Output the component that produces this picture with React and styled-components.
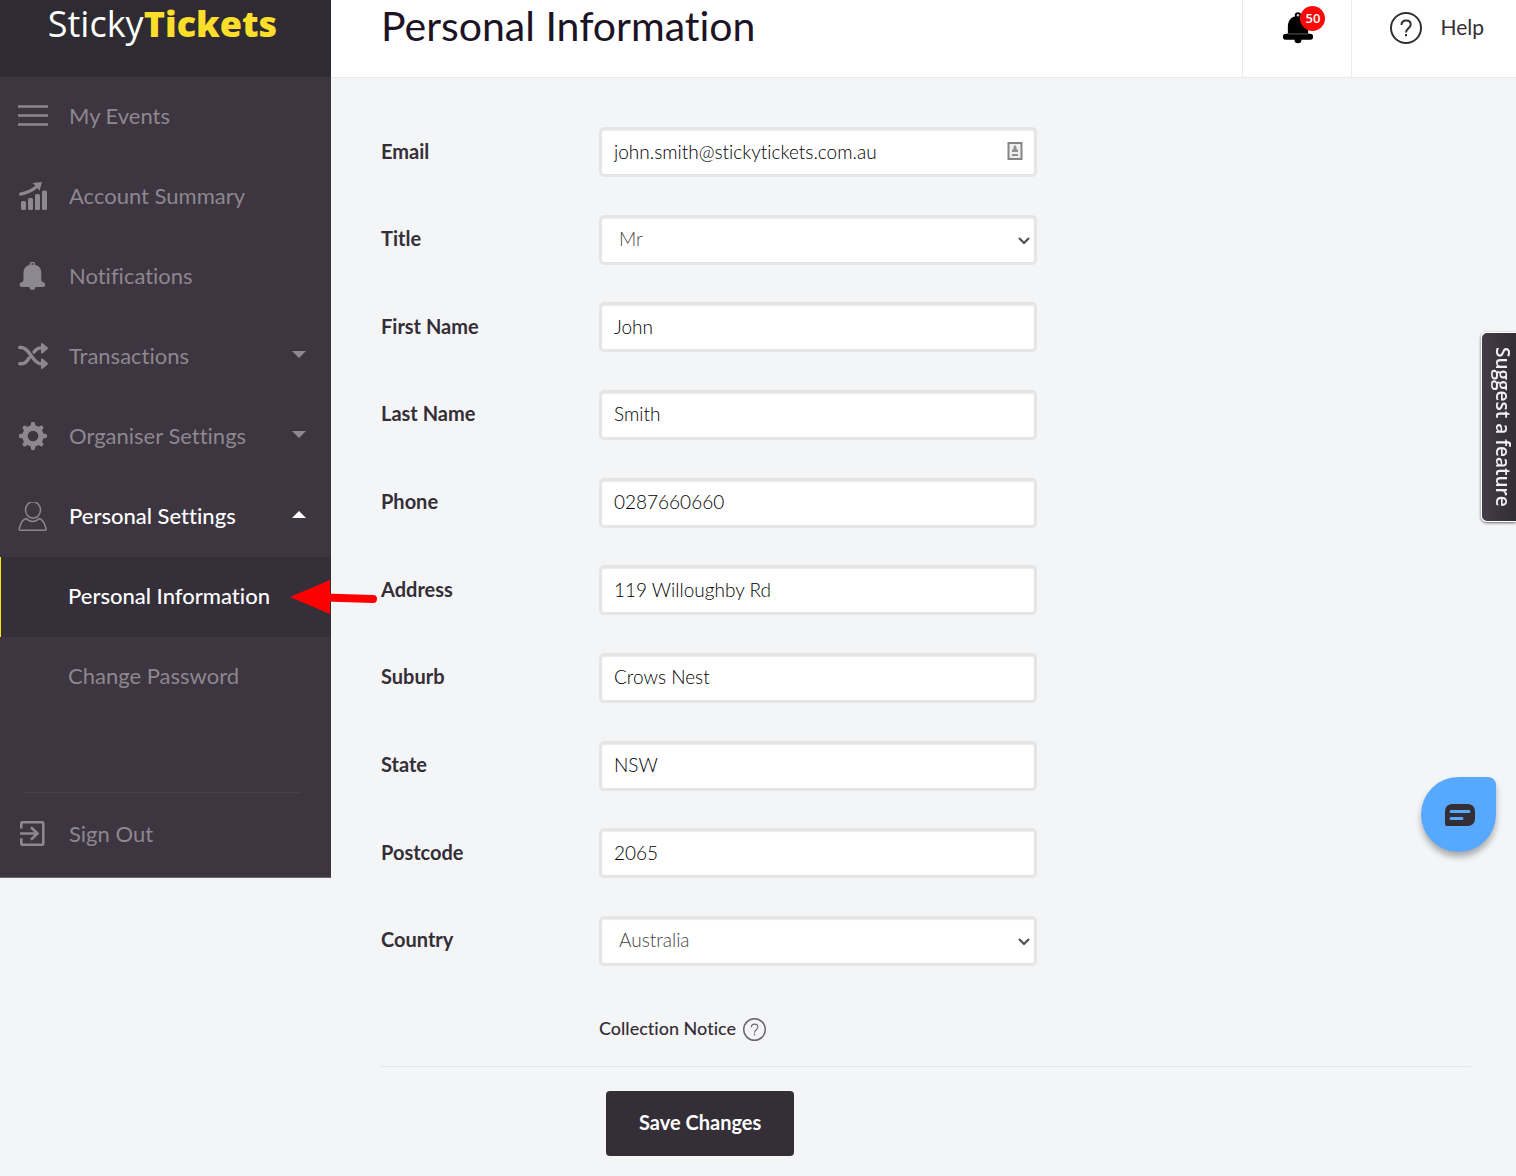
import React from "react";
import styled, { createGlobalStyle } from "styled-components";

const GlobalStyle = createGlobalStyle`
  *, *::before, *::after { box-sizing: border-box; }
  body {
    margin: 0;
    background: #f4f5f7;
    color: #342e37;
    font-family: Lato, "Open Sans", sans-serif;
    font-size: 20px;
    font-variant-ligatures: none;
  }
`;

const Page = styled.div`
  display: flex;
  align-items: flex-start;
`;

const Sidebar = styled.aside`
  flex: 0 0 331px;
  background: #3d3540;
  border-bottom: 1px solid #6b6570;
`;

const Brand = styled.a`
  display: flex;
  justify-content: center;
  height: 77px;
  padding-right: 6px;
  background: #2f2b32;
  color: #fff;
  font-family: "Open Sans", sans-serif;
  font-size: 36px;
  line-height: 48px;
  font-weight: 500;
  text-decoration: none;
`;

const BrandAccent = styled.span`
  color: #fddf2b;
  font-weight: 800;
`;

const NavList = styled.ul`
  margin: 0;
  padding: 0;
  list-style: none;
`;

const NavItem = styled.li`
  position: relative;
`;

const NavLink = styled.a`
  display: flex;
  align-items: center;
  height: 80px;
  padding: 0 24px 0 18px;
  color: ${(p) => (p.$active ? "#fff" : "#8d8790")};
  font-size: 22px;
  font-weight: ${(p) => (p.$active ? 500 : 400)};
  text-decoration: none;
`;

const NavText = styled.span`
  padding-bottom: 3px;
`;

const SubLink = styled(NavLink)`
  padding-left: 67px;
  border-left: 1px solid ${(p) => (p.$active ? "#ffe600" : "transparent")};
  background: ${(p) => (p.$active ? "#352f39" : "transparent")};
`;

const NavIcon = styled.svg`
  width: 30px;
  height: 30px;
  margin-right: 21px;
  color: #8d8790;
`;

const Caret = styled.svg`
  width: 14px;
  height: 7px;
  margin: 0 1px 5px auto;
  color: ${(p) => (p.$active ? "#fff" : "#8d8790")};
`;

const Pointer = styled.svg`
  position: absolute;
  left: 289px;
  top: 22px;
  width: 90px;
  height: 36px;
`;

const SignOut = styled.div`
  margin-top: 75px;

  &::before {
    content: "";
    display: block;
    height: 1px;
    margin: 0 31px 0 24px;
    background: #474047;
  }

  ${NavLink} { height: 84px; }
`;

const Main = styled.main`
  flex: 1;
  min-width: 0;
`;

const TopBar = styled.header`
  display: flex;
  height: 78px;
  padding-left: 50px;
  background: #fff;
  border-bottom: 1px solid #ebebed;
`;

const Title = styled.h1`
  flex: 1;
  margin: 0;
  color: #1c1424;
  font-size: 41px;
  line-height: 52px;
  font-weight: 400;
`;

const AlertButton = styled.button`
  display: flex;
  justify-content: center;
  width: 110px;
  padding: 12px 0 0 2px;
  border: solid #ebebed;
  border-width: 0 1px;
  background: none;
`;

const BellWrap = styled.span`
  position: relative;
  display: block;
  height: 32px;
`;

const Badge = styled.span`
  position: absolute;
  left: 17px;
  top: -6px;
  width: 25px;
  height: 25px;
  border-radius: 50%;
  background: #fb0a0a;
  color: #fff;
  font: 600 13px/24px "Open Sans", sans-serif;
  text-align: center;
`;

const HelpLink = styled.a`
  display: flex;
  align-items: center;
  gap: 18px;
  height: 55px;
  padding: 0 32px 0 38px;
  color: #342e37;
  font-size: 21px;
  text-decoration: none;
`;

const Form = styled.form`
  padding: 49px 45px 20px 50px;
`;

const Fields = styled.div`
  display: flex;
  flex-direction: column;
  justify-content: space-between;
  min-height: 839px;
`;

const Field = styled.div`
  display: flex;
  align-items: center;
`;

const Label = styled.label`
  flex: 0 0 20%;
  padding-bottom: 3px;
  font-size: 20px;
  font-weight: 700;
`;

const Control = styled.div`
  position: relative;
  flex: 0 1 438px;
`;

const TextInput = styled.input`
  display: block;
  width: 100%;
  height: 50px;
  padding: 0 12px 2px;
  border: 3px solid #e5e5e5;
  border-radius: 5px;
  background: #fff;
  box-shadow: inset 0 1px 1px rgba(0, 0, 0, 0.08);
  color: #000;
  font-family: inherit;
  font-size: 19px;
  font-weight: 300;
  font-variant-ligatures: none;
`;

const Select = styled(TextInput)`
  padding: 0 30px 2px 17px;
  color: #444;
  appearance: none;
`;

const Chevron = styled.svg`
  position: absolute;
  right: 7px;
  top: 22px;
  width: 12px;
  height: 8px;
  pointer-events: none;
`;

const ContactIcon = styled.svg`
  position: absolute;
  right: 14px;
  top: 14px;
  width: 16px;
  height: 20px;
`;

const Notice = styled.div`
  display: flex;
  align-items: center;
  gap: 7px;
  margin: 51px 0 24px 20%;
  font-size: 18px;
  font-weight: 500;
`;

const HintButton = styled.button`
  display: flex;
  padding: 0;
  border: 0;
  background: none;
  color: #68646b;
`;

const Divider = styled.hr`
  margin: 0 0 24px;
  border: 0;
  border-top: 1px solid #e5e5e7;
`;

const Actions = styled.div`
  padding-left: 7px;
  margin-left: 20%;
`;

const SaveButton = styled.button`
  height: 65px;
  padding: 0 33px 4px;
  border: 0;
  border-radius: 4px;
  background: #342e37;
  color: #fff;
  font-family: inherit;
  font-size: 20px;
  font-weight: 700;
`;

const SuggestTab = styled.button`
  position: fixed;
  right: 0;
  top: 332px;
  width: 35px;
  height: 190px;
  padding: 0 0 0 8px;
  border: 1px solid #fff;
  border-right: 0;
  border-radius: 6px 0 0 6px;
  background: linear-gradient(90deg, #443d48, #322c35);
  box-shadow: 0 1px 3px rgba(0, 0, 0, 0.6);
  color: #f1f0f2;
  font: 600 19px/24px "Open Sans", sans-serif;
  writing-mode: vertical-rl;
  text-align: center;
`;

const ChatButton = styled.button`
  position: fixed;
  right: 20px;
  top: 777px;
  display: flex;
  align-items: center;
  justify-content: center;
  width: 75px;
  height: 75px;
  padding: 0 0 0 2px;
  border: 0;
  border-radius: 50% 8px 50% 50%;
  background: #57a8ff;
  box-shadow: 0 5px 6px rgba(0, 0, 0, 0.3);
`;

const ICONS = {
  menu: (
    <path stroke="currentColor" strokeWidth="2.500" d="M0 4.500h30M0 13.500h30M0 22.500h30" />
  ),
  chart: (
    <g fill="currentColor">
      <rect x="3" y="19" width="5" height="9" rx="1.500" />
      <rect x="10" y="16" width="5" height="12" rx="1.500" />
      <rect x="17" y="12" width="5" height="16" rx="1.500" />
      <rect x="24" y="8.500" width="5" height="19.500" rx="1.500" />
      <path d="M2 10.500C9 9 13.500 6.800 17.500 3.500L14.500 1 24 0 21.500 9l-2-3C15 9.800 9.500 12.500 2.500 13.800a1.700 1.700 0 0 1-.5-3.300z" />
    </g>
  ),
  bell: (
    <>
      <path
        fill="currentColor"
        d="M5.500 11.500C5.500 6.300 8 3.600 11.800 2.800V2.200a2.600 2.600 0 0 1 5.200 0v.6c3.800.8 6.300 3.500 6.300 8.700v6.500c0 1.200 1 1.900 2.600 2.400 2.200 1 1.400 4.500-.6 4.500h-8a2.900 2.900 0 0 1-5.800 0h-8c-2 0-2.800-3.500-.6-4.500 1.600-.5 2.600-1.200 2.600-2.400z"
      />
      <circle cx="14.400" cy="2" r="1" fill="#3d3540" />
    </>
  ),
  shuffle: (
    <g fill="none" stroke="currentColor" strokeWidth="3.400" strokeLinecap="round" strokeLinejoin="round">
      <path d="M1.700 5.500h2C12 6 14.500 21.500 23 21.800h4M1.700 21.800h2c3.500-.2 5.600-2.700 7.300-5.700M16 10c1.800-2.700 4-4 7-4.100h4" />
      <path fill="currentColor" strokeWidth="2" d="M24 2l5 4.300-5 4.200zM24 17.500l5 4.300-5 4.200z" />
    </g>
  ),
  gear: (
    <g stroke="currentColor" fill="none">
      <circle cx="15" cy="14" r="8" strokeWidth="5.400" />
      <path
        strokeWidth="4.400"
        strokeLinecap="round"
        d="M15 4V2M15 24v2M5 14H3M25 14h2M8 7L6.800 5.800M22 21l1.200 1.200M8 21l-1.200 1.200M22 7l1.200-1.200"
      />
    </g>
  ),
  user: (
    <g fill="none" stroke="currentColor" strokeWidth="1.500">
      <ellipse cx="15" cy="8" rx="7.500" ry="8.200" />
      <path d="M8.500 16.500C5.500 17.300 4 19 2.800 22L1.200 26.500c-.3 1 .2 1.700 1.200 1.700h24.500c1 0 1.500-.7 1.200-1.700L26.500 22c-1.200-3-2.700-4.700-5.700-5.500-1.500 1.800-3.500 3-6 3s-4.800-1.200-6.300-3z" />
    </g>
  ),
  exit: (
    <g fill="none" stroke="currentColor" strokeWidth="2.600">
      <path d="M3.300 8.500V3.300a1 1 0 0 1 1-1h20a1 1 0 0 1 1 1v20.500a1 1 0 0 1-1 1h-20a1 1 0 0 1-1-1v-5.500M2 13.500h17.500M13 7.300l6.500 6.200L13 19.800" />
    </g>
  ),
};

function QuestionCircle({ size, stroke, mark }) {
  return (
    <svg width={size} height={size} viewBox="0 0 32 32" fill="none" stroke="currentColor" strokeWidth={stroke} aria-hidden="true">
      <circle cx="16" cy="16" r="15" />
      <path strokeWidth={mark} d="M11.500 13c0-2.800 2-4.500 4.700-4.500s4.500 1.500 4.500 4.100c0 3.700-4.700 3.800-4.700 8M16 22v2.200" />
    </svg>
  );
}

const NAV = [
  { icon: "menu", text: "My Events" },
  { icon: "chart", text: "Account Summary" },
  { icon: "bell", text: "Notifications" },
  { icon: "shuffle", text: "Transactions", caret: "down" },
  { icon: "gear", text: "Organiser Settings", caret: "down" },
  { icon: "user", text: "Personal Settings", caret: "up", active: true },
];

const FIELDS = [
  { id: "email", label: "Email", value: "john.smith@stickytickets.com.au", contact: true },
  { id: "title", label: "Title", value: "Mr", options: ["Mr", "Mrs", "Ms", "Miss", "Dr"] },
  { id: "first-name", label: "First Name", value: "John" },
  { id: "last-name", label: "Last Name", value: "Smith" },
  { id: "phone", label: "Phone", value: "0287660660" },
  { id: "address", label: "Address", value: "119 Willoughby Rd" },
  { id: "suburb", label: "Suburb", value: "Crows Nest" },
  { id: "state", label: "State", value: "NSW" },
  { id: "postcode", label: "Postcode", value: "2065" },
  { id: "country", label: "Country", value: "Australia", options: ["Australia", "New Zealand"] },
];

function NavEntry({ icon, text, caret, active }) {
  return (
    <NavLink href="#" $active={active}>
      <NavIcon viewBox="0 0 30 30" aria-hidden="true">{ICONS[icon]}</NavIcon>
      <NavText>{text}</NavText>
      {caret && (
        <Caret viewBox="0 0 14 7" $active={active} aria-hidden="true">
          <path fill="currentColor" d={caret === "up" ? "M0 7L7 0l7 7z" : "M0 0h14L7 7z"} />
        </Caret>
      )}
    </NavLink>
  );
}

export default function App() {
  return (
    <Page>
      <GlobalStyle />
      <Sidebar>
        <Brand href="#">
          <span>Sticky<BrandAccent>Tickets</BrandAccent></span>
        </Brand>
        <nav>
          <NavList>
            {NAV.map((item) => (
              <NavItem key={item.text}><NavEntry {...item} /></NavItem>
            ))}
            <NavItem>
              <SubLink href="#" $active><NavText>Personal Information</NavText></SubLink>
              <Pointer viewBox="0 0 90 36" aria-hidden="true">
                <path stroke="#f00" strokeWidth="8" strokeLinecap="round" d="M36 18.500L84 20" />
                <path fill="#f00" d="M1 18L41 1v34z" />
              </Pointer>
            </NavItem>
            <NavItem><SubLink href="#"><NavText>Change Password</NavText></SubLink></NavItem>
          </NavList>
          <SignOut><NavEntry icon="exit" text="Sign Out" /></SignOut>
        </nav>
      </Sidebar>

      <Main>
        <TopBar>
          <Title>Personal Information</Title>
          <AlertButton type="button" aria-label="Notifications">
            <BellWrap>
              <svg width="30" height="32" viewBox="1 0 28 30" aria-hidden="true">
                <path d="M5.500 14C5.500 8.800 7.800 5.200 12 4.200V3.200a3 3 0 0 1 6 0v1c4.200 1 6.500 4.600 6.500 9.800v6.300h1.800a2.900 2.900 0 0 1 0 5.800H18.300a3.300 3.300 0 0 1-6.600 0H3.700a2.900 2.900 0 0 1 0-5.800h1.800z" />
                <circle cx="15" cy="3" r="1.200" fill="#ccc" />
                <path stroke="#555" d="M5 20.500h20" />
              </svg>
              <Badge>50</Badge>
            </BellWrap>
          </AlertButton>
          <HelpLink href="#">
            <QuestionCircle size={32} stroke={2} mark={2} />
            <NavText>Help</NavText>
          </HelpLink>
        </TopBar>

        <Form onSubmit={(e) => e.preventDefault()}>
          <Fields>
            {FIELDS.map((f) => (
              <Field key={f.id}>
                <Label htmlFor={f.id}>{f.label}</Label>
                <Control>
                  {f.options ? (
                    <>
                      <Select as="select" id={f.id} defaultValue={f.value}>
                        {f.options.map((o) => <option key={o}>{o}</option>)}
                      </Select>
                      <Chevron viewBox="0 0 12 8" aria-hidden="true">
                        <path fill="none" stroke="#505050" strokeWidth="2.200" d="M1 1l5 5 5-5" />
                      </Chevron>
                    </>
                  ) : (
                    <TextInput id={f.id} type="text" defaultValue={f.value} />
                  )}
                  {f.contact && (
                    <ContactIcon viewBox="0 0 16 20" aria-hidden="true">
                      <rect x="1.500" y="2" width="13" height="16" fill="#eee" stroke="#858585" strokeWidth="2" />
                      <path fill="#909090" d="M8 4l1.500 2v2L11 9v2H5V9l1.500-1V6zM5 13h6v2H5z" />
                    </ContactIcon>
                  )}
                </Control>
              </Field>
            ))}
          </Fields>
          <Notice>
            <NavText>Collection Notice</NavText>
            <HintButton type="button" aria-label="About the collection notice">
              <QuestionCircle size={23} stroke={2} mark={1.5} />
            </HintButton>
          </Notice>
          <Divider />
          <Actions><SaveButton type="submit">Save Changes</SaveButton></Actions>
        </Form>
      </Main>

      <SuggestTab type="button">Suggest a feature</SuggestTab>
      <ChatButton type="button" aria-label="Open chat">
        <svg width="30" height="22" viewBox="0 0 30 22" aria-hidden="true">
          <path fill="#342e37" d="M7 0h16a7 7 0 0 1 7 7v8a7 7 0 0 1-7 7H2a2 2 0 0 1-2-2V7a7 7 0 0 1 7-7z" />
          <path stroke="#57a8ff" strokeWidth="3" strokeLinecap="round" d="M6 7.500h18M6 14.500h11" />
        </svg>
      </ChatButton>
    </Page>
  );
}
